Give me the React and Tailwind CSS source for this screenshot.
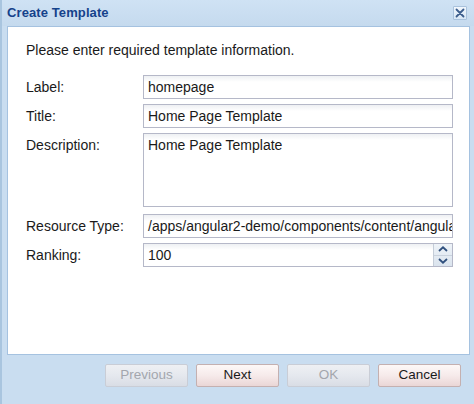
import React from "react";

const font = { fontFamily: '"Liberation Sans", Arial, sans-serif' };

function Field({ label, children, className = "" }) {
  return (
    <div className={`flex items-start ${className}`}>
      <div className="w-[117px] shrink-0 pt-[4px] text-[14px] leading-[16px] text-[#1a1a1a]">{label}</div>
      {children}
    </div>
  );
}

function TextBox({ value, h = "h-[24px]", multi = false, children }) {
  return (
    <div
      className={`relative w-[310px] ${h} border border-[#b5b8c8] bg-white bg-gradient-to-b from-[#eef0f3] to-white to-[6px] px-[4px] ${multi ? "pt-[3px]" : "flex items-center"} text-[14px] leading-[16px] text-[#1a1a1a] overflow-hidden whitespace-nowrap`}
    >
      {value}
      {children}
    </div>
  );
}

function Btn({ label, disabled }) {
  return (
    <div
      className={`flex h-[23px] w-[83px] items-center justify-center rounded-[2px] border text-[13.5px] ${
        disabled
          ? "border-[#c9cdd6] bg-gradient-to-b from-[#eef0f3] via-[#e5e8ee] to-[#d9dde5] text-[#a3a6ad]"
          : "border-[#c4b0b0] bg-gradient-to-b from-[#fdf8f7] via-[#f6eaea] to-[#ead6d6] text-[#1a1a1a]"
      }`}
    >
      {label}
    </div>
  );
}

export default function App() {
  return (
    <div style={font} className="w-[474px] h-[404px] bg-[#c9ddf0] border-l-[2px] border-[#a9c5df] flex flex-col overflow-hidden">
      <div className="h-[26px] shrink-0 flex items-center justify-between pl-[5px] pr-[7px] bg-gradient-to-b from-[#cfe2f4] to-[#c5daee]">
        <span className="text-[13px] font-bold text-[#15428b] tracking-[0.1px]">Create Template</span>
        <div className="w-[14px] h-[14px] border border-[#a9c2dc] bg-gradient-to-b from-[#f1f7fd] to-[#d8e7f5] flex items-center justify-center rounded-[1px]">
          <svg width="10" height="10" viewBox="0 0 10 10">
            <path d="M1.5 1.5 L8.5 8.5 M8.5 1.5 L1.5 8.5" stroke="#3c5d8c" strokeWidth="1.8" strokeLinecap="round" />
          </svg>
        </div>
      </div>
      <div className="ml-[5px] mr-[4px] h-[329px] shrink-0 bg-white border border-[#a5c2e0] pl-[18px] pt-[15px]">
        <div className="text-[14px] leading-[16px] text-[#1a1a1a]">Please enter required template information.</div>
        <Field label="Label:" className="mt-[17px]">
          <TextBox value="homepage" />
        </Field>
        <Field label="Title:" className="mt-[5px]">
          <TextBox value="Home Page Template" />
        </Field>
        <Field label="Description:" className="mt-[5px]">
          <TextBox value="Home Page Template" h="h-[74px]" multi />
        </Field>
        <Field label="Resource Type:" className="mt-[7px]">
          <TextBox value="/apps/angular2-demo/components/content/angular" />
        </Field>
        <Field label="Ranking:" className="mt-[5px]">
          <TextBox value="100">
            <div className="absolute right-0 top-0 bottom-0 w-[19px] flex flex-col border-l border-[#c5cdd8] bg-gradient-to-b from-[#eef3f8] to-[#dbe4ee]">
              <div className="flex-1 flex items-center justify-center border-b border-[#c9d2dd]">
                <svg width="10" height="6" viewBox="0 0 10 6">
                  <path d="M1 5 L5 1.3 L9 5" fill="none" stroke="#30507e" strokeWidth="1.8" />
                </svg>
              </div>
              <div className="flex-1 flex items-center justify-center">
                <svg width="10" height="6" viewBox="0 0 10 6">
                  <path d="M1 1 L5 4.7 L9 1" fill="none" stroke="#30507e" strokeWidth="1.8" />
                </svg>
              </div>
            </div>
          </TextBox>
        </Field>
      </div>
      <div className="flex justify-end gap-[8px] pr-[13px] pt-[9px]">
        <Btn label="Previous" disabled />
        <Btn label="Next" />
        <Btn label="OK" disabled />
        <Btn label="Cancel" />
      </div>
    </div>
  );
}
